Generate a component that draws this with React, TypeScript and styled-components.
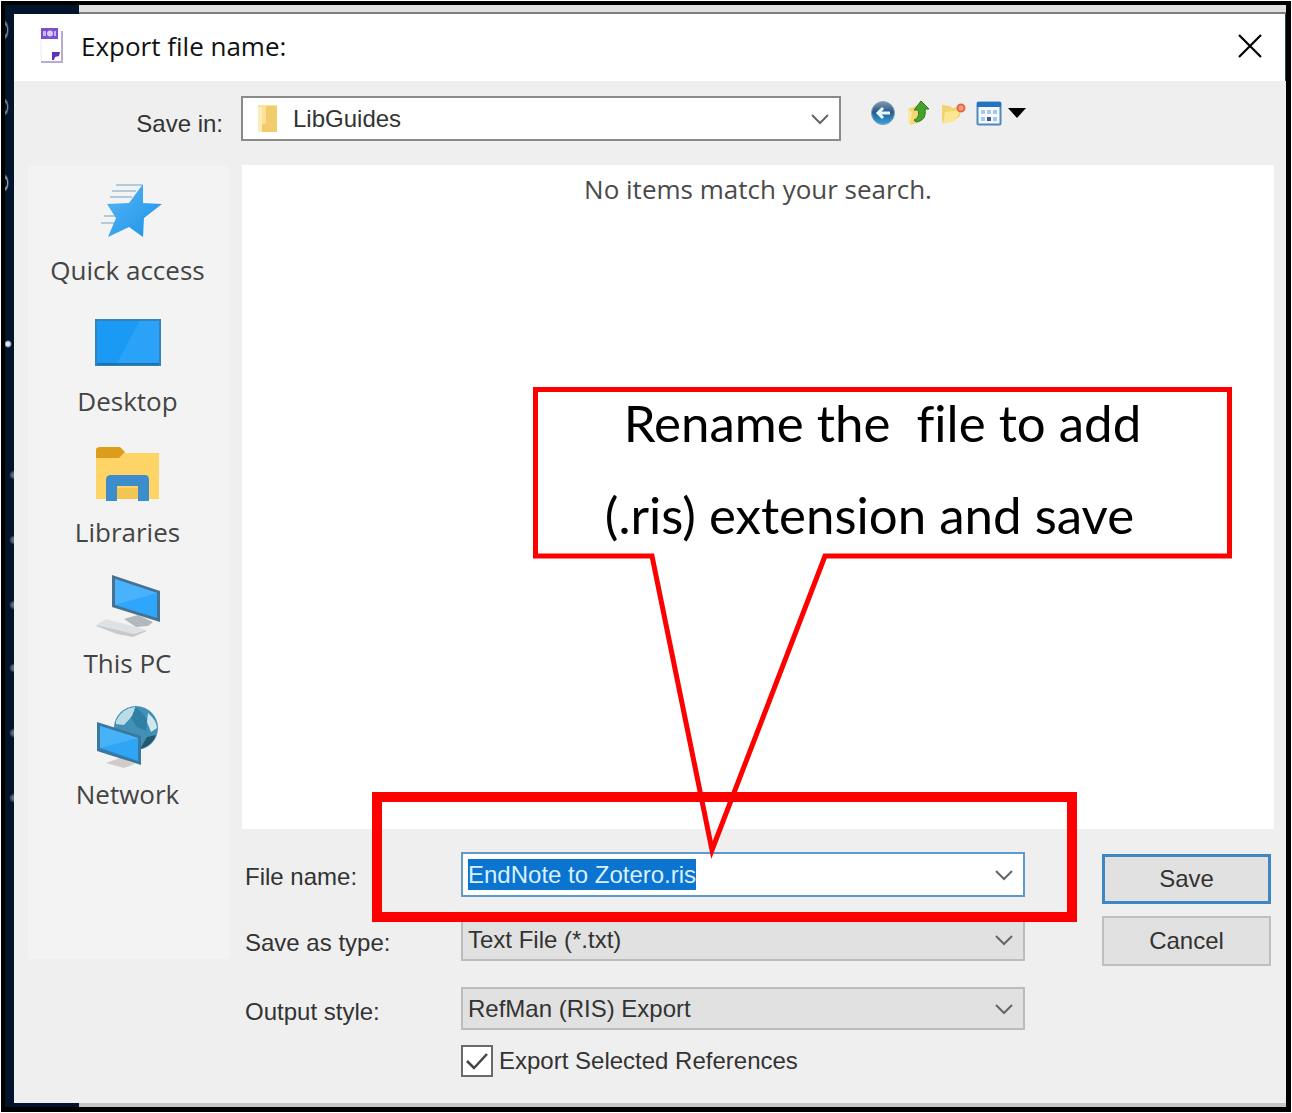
import React, { useEffect, useRef } from "react";
import styled, { createGlobalStyle } from "styled-components";

const GlobalStyle = createGlobalStyle`
  *, *::before, *::after { box-sizing: border-box; }
  body { margin: 0; background: #fff; }
  button, input, select { font: inherit; color: inherit; margin: 0; }
`;

const ui = `"Open Sans", "Noto Sans", sans-serif`;
const classic = `"Liberation Sans", Arial, sans-serif`;

const Screen = styled.div`
  min-height: 100vh;
  padding: 1px;
  display: flex;
`;

const Desktop = styled.div`
  flex: 1;
  display: flex;
  border: 5px solid #000;
  border-left-width: 4px;
  border-top-width: 4px;
  padding: 9px 0 4px 9px;
  background:
    radial-gradient(circle at 3px 339px, #dfe6ee 2px, transparent 4px),
    radial-gradient(circle at 9px 470px, #5d6c80 2px, transparent 5px),
    radial-gradient(circle at 9px 535px, #5d6c80 2px, transparent 5px),
    radial-gradient(circle at 9px 600px, #5d6c80 2px, transparent 5px),
    radial-gradient(circle at 9px 663px, #5d6c80 2px, transparent 5px),
    radial-gradient(circle at 9px 728px, #5d6c80 2px, transparent 5px),
    radial-gradient(circle at 9px 793px, #5d6c80 2px, transparent 5px),
    radial-gradient(ellipse 4px 10px at 0 25px, transparent 40%, #8494a6 60%, transparent 100%),
    radial-gradient(ellipse 4px 9px at 0 102px, transparent 40%, #8494a6 60%, transparent 100%),
    radial-gradient(ellipse 4px 9px at 0 178px, transparent 40%, #a4b0be 60%, transparent 100%),
    linear-gradient(90deg, #02142b 74px, transparent 74px),
    linear-gradient(#e0e0e0 7px, #7d7d7d 7px, #7d7d7d 9px, #c6c6c6 9px);
`;

const Dialog = styled.section`
  flex: 1;
  display: flex;
  flex-direction: column;
  background: #efefef;
  color: #333;
  font: 24px/32px ${classic};
`;

const TitleBar = styled.header`
  display: flex;
  align-items: center;
  gap: 16px;
  height: 67px;
  padding: 0 23px 3px 25px;
  border-right: 1px solid #2a4a5c;
  background: #fff;
  color: #111;
`;

const Title = styled.h1`
  flex: 1;
  margin: 0;
  font: 400 26px/32px ${ui};
`;

const IconButton = styled.button`
  display: flex;
  padding: 0;
  border: 0;
  background: none;
`;

const LookIn = styled.div`
  display: grid;
  grid-template-columns: 227px minmax(200px, 600px) auto;
  align-items: start;
  height: 84px;
  padding: 15px 12px 0 0;
`;

const LookInLabel = styled.label`
  justify-self: end;
  margin-right: 18px;
  padding: 12px 0;
`;

const Tools = styled.div`
  display: flex;
  align-items: center;
  gap: 10px;
  height: 34px;
  margin-left: 29px;
`;

const ViewTools = styled.div`
  display: flex;
  align-items: center;
  gap: 6px;
`;

const Columns = styled.div`
  flex: 1;
  display: grid;
  grid-template-columns: 201px 1fr;
  gap: 13px;
  padding: 0 12px 0 14px;
`;

const Places = styled.nav`
  margin-bottom: 144px;
  padding: 15px 2px 0 0;
  background: #f3f3f3;
`;

const Place = styled.a`
  display: flex;
  flex-direction: column;
  align-items: center;
  gap: 10px;
  height: 131px;
  color: #444;
  text-decoration: none;
  font: 26px/32px ${ui};
`;

const Main = styled.main`
  display: flex;
  flex-direction: column;
`;

const FileList = styled.div`
  flex: 1;
  min-height: 320px;
  padding-top: 8px;
  background: #fff;
  text-align: center;
  color: #4a4a4a;
  font: 26px/32px ${ui};
`;

const Form = styled.form`
  display: grid;
  grid-template-columns: 1fr 169px;
  gap: 77px;
  padding: 23px 3px 26px;
`;

const Fields = styled.div`
  display: grid;
  grid-template-columns: 216px 1fr;
  grid-template-rows: 66px 69px 58px 32px;
  align-items: start;
`;

const FieldLabel = styled.label`
  padding-top: 9px;
`;

const Field = styled.div`
  position: relative;
`;

const Combo = styled.div<{ $tone: "white" | "grey" | "active" }>`
  display: flex;
  align-items: center;
  height: ${(p) => (p.$tone === "grey" ? "43px" : "45px")};
  border: 2px solid ${(p) => ({ white: "#8a8a8a", grey: "#bcbcbc", active: "#5f9bc9" })[p.$tone]};
  background: ${(p) => (p.$tone === "grey" ? "#e1e1e1" : "#fff")};
`;

const LocationCombo = styled(Combo)`
  padding-left: 14px;
`;

const Stack = styled.div`
  flex: 1;
  display: grid;
  align-items: center;

  > * { grid-area: 1 / 1; }
  > svg { justify-self: end; margin-right: 9px; pointer-events: none; }
`;

const Select = styled.select`
  appearance: none;
  width: 100%;
  height: 36px;
  padding: 0 0 0 5px;
  border: 0;
  outline: 0;
  background: transparent;
`;

const LocationSelect = styled(Select)`
  padding-left: 14px;
`;

const FileInput = styled.input`
  flex: 1;
  min-width: 0;
  height: 31px;
  margin-left: 5px;
  padding: 0;
  border: 0;
  outline: 0;
  line-height: 31px;
  background: transparent;

  &::selection { background: #0a74d0; color: #d9f0ff; }
`;

const DropButton = styled(IconButton)`
  margin-right: 9px;
`;

const CheckRow = styled.label`
  grid-column: 2;
  display: flex;
  align-items: center;
  gap: 6px;
`;

const CheckStack = styled.span`
  display: grid;

  > * { grid-area: 1 / 1; }
  > svg { pointer-events: none; }
`;

const CheckBox = styled.input`
  appearance: none;
  width: 32px;
  height: 32px;
  border: 2px solid #6a6a6a;
  background: #fff;
`;

const Actions = styled.div`
  display: flex;
  flex-direction: column;
  gap: 12px;
  padding-top: 2px;
`;

const Action = styled.button<{ $primary?: boolean }>`
  height: 50px;
  padding: 0;
  border: ${(p) => (p.$primary ? "3px solid #3f87c4" : "2px solid #bfbfbf")};
  background: #e1e1e1;
`;

const Highlight = styled.div`
  position: absolute;
  inset: -60px -52px -25px -89px;
  z-index: 1;
  border: 10px solid #f00;
  pointer-events: none;
`;

const Callout = styled.div`
  position: absolute;
  z-index: 2;
  left: 72px;
  bottom: 33px;
  width: 699px;
  height: 477px;
  display: grid;
  pointer-events: none;

  > * { grid-area: 1 / 1; }
`;

const CalloutText = styled.p`
  margin: -10px 0 0;
  white-space: pre;
  text-align: center;
  color: #000;
  font: 51px/92px Lato, ${ui};
  font-variant-ligatures: none;
`;

const Chevron = () => (
  <svg width="20" height="20" viewBox="0 0 20 20" fill="none" stroke="#666" strokeWidth="2">
    <path d="M2 6l8 8 8-8" />
  </svg>
);

const DocIcon = () => (
  <svg width="26" height="36" viewBox="0 0 26 36">
    <path d="M23 3v31H2" fill="none" stroke="#b9a9d6" strokeWidth="2" />
    <path d="M2 0h17v11H2z" fill="#7a4fd0" />
    <path d="M4 3h3v5H4zM15 3h2v5h-2z" fill="#c9b5f5" />
    <circle cx="11" cy="5.500" r="3" fill="#d9ccfa" />
    <path d="M2 11v21" stroke="#ece6f7" strokeWidth="1" />
    <path d="M13 24h8l-1 4-4 1-1 3h-2z" fill="#5c33b8" />
  </svg>
);

const CloseIcon = () => (
  <svg width="24" height="24" viewBox="0 0 24 24" stroke="#000" strokeWidth="2.200">
    <path d="M1 1l22 22M23 1L1 23" />
  </svg>
);

const FolderIcon = () => (
  <svg width="22" height="30" viewBox="0 0 22 30">
    <path d="M1 1h19v27H1z" fill="#fbe19a" />
    <path d="M9 2h11v26H5v-7l4-2z" fill="#f2cb6c" />
    <path d="M1 3h4v25H1z" fill="#fdebb8" />
  </svg>
);

const BackIcon = () => (
  <svg width="26" height="26" viewBox="0 0 26 26">
    <defs>
      <linearGradient id="back" x1="0" y1="0" x2="0" y2="1">
        <stop offset="0" stopColor="#8796a8" />
        <stop offset=".45" stopColor="#245a8c" />
        <stop offset="1" stopColor="#38a5dc" />
      </linearGradient>
    </defs>
    <circle cx="13" cy="13" r="11.500" fill="url(#back)" stroke="#7fa3c0" />
    <path d="M20 13H8M13 8l-5 5 5 5" fill="none" stroke="#eaf8ff" strokeWidth="3" />
  </svg>
);

const UpIcon = () => (
  <svg width="24" height="26" viewBox="0 0 24 26">
    <path d="M2 9l8-3 4 4v12L4 25z" fill="#f2d774" />
    <path d="M2 9l4 4-2 12-2-2z" fill="#fae9a5" />
    <path d="M8 20c5-2 5-6 4-10H8l7-9 8 8h-4c1 7-1 12-9 13z" fill="#46a02c" stroke="#2c7a1c" />
  </svg>
);

const NewFolderIcon = () => (
  <svg width="26" height="26" viewBox="0 0 26 26">
    <path d="M2 5l8 1 2 2 8-1v9l-6 5-12 2z" fill="#f1d36f" />
    <path d="M5 12l16-2-6 11-12 3z" fill="#fbe793" />
    <circle cx="21" cy="8" r="3.500" fill="#f7a27c" stroke="#e5673f" strokeWidth="2" />
  </svg>
);

const ViewIcon = () => (
  <svg width="26" height="26" viewBox="0 0 26 26">
    <rect x="1.500" y="2.500" width="23" height="22" rx="1" fill="#f4faff" stroke="#4f88bd" strokeWidth="2" />
    <path d="M1 2h24v5H1z" fill="#2472c4" />
    <path d="M5 10h4v4H5zM11 10h4v4h-4zM17 10h4v4h-4zM5 17h4v4H5zM17 17h4v4h-4z" fill="#a9c8e4" />
    <path d="M11 17h4v4h-4z" fill="#44597d" />
  </svg>
);

const Caret = () => (
  <svg width="18" height="10" viewBox="0 0 18 10">
    <path d="M0 0h18L9 10z" fill="#000" />
  </svg>
);

const StarIcon = () => (
  <svg width="68" height="64" viewBox="0 0 68 64">
    <defs>
      <linearGradient id="star" x1="0" y1="0" x2="1" y2="1">
        <stop offset="0" stopColor="#5ab8f5" />
        <stop offset="1" stopColor="#1a90e8" />
      </linearGradient>
    </defs>
    <path d="M22 5h26M18 11h24M16 17h22M10 36h12M7 43h13" stroke="#9dbdd2" strokeWidth="1.500" />
    <path d="M49 4v19l19 1-18 14-1 19-14-10-21 10 8-19-9-14 22-1z" fill="url(#star)" />
  </svg>
);

const DesktopIcon = () => (
  <svg width="68" height="64" viewBox="0 0 68 64">
    <path d="M2 9h64v45H2z" fill="#1a9af5" />
    <path d="M46 9h20v45H22z" fill="#2aa2f8" />
    <path d="M2 9h64v45H2z" fill="none" stroke="#2f86bf" strokeWidth="2" />
    <path d="M3 53h62" stroke="#2272a8" strokeWidth="2" />
  </svg>
);

const LibrariesIcon = () => (
  <svg width="68" height="64" viewBox="0 0 68 64">
    <path d="M2 6h24l5 5h34v46H2z" fill="#fdd465" />
    <path d="M2 9q0-4 4-4h20l5 5-6 6H2z" fill="#dc9c1c" />
    <path d="M12 59V38q0-5 5-5h34q4 0 4 5v21H44V44H23v15z" fill="#3b8ecb" />
    <path d="M23 46h21v11H23z" fill="#f3c552" />
  </svg>
);

const PcIcon = () => (
  <svg width="68" height="64" viewBox="0 -2 68 64">
    <path d="M2 51l10-6 41 11-14 6-16-3z" fill="#c6cacd" />
    <path d="M12 44l41 11-13 4L2 50z" fill="#dfe2e4" />
    <path d="M30 44l14-4 15 7-5 4-12 1z" fill="#b3b8bc" />
    <path d="M18 0l48 16v31L18 32z" fill="#47718f" />
    <path d="M21 4l42 14v25L21 30z" fill="#2ea6fb" />
    <path d="M21 4l42 14-42 12z" fill="#48b2fc" />
  </svg>
);

const NetworkIcon = () => (
  <svg width="68" height="64" viewBox="0 -2 68 64">
    <circle cx="42" cy="22" r="22" fill="#4290b6" />
    <path d="M22 15Q28 2 41 1l-2 8-9 10-8-1z" fill="#b9dce8" />
    <path d="M42 1q7 7 11 12l-1 12-9-4-6-9z" fill="#2f7fa5" />
    <path d="M54 7q9 8 9 15l-6 4-4-10z" fill="#cfe7ef" />
    <path d="M46 43q12-3 16-14l-9 2z" fill="#235870" />
    <path d="M12 57l14-5 15 6-11 4z" fill="#cfccc9" />
    <path d="M3 16l44 14v29L3 45z" fill="#39799f" />
    <path d="M6 20l38 12v23L6 42z" fill="#2ea6f5" />
    <path d="M6 20l38 12L6 42z" fill="#48b2f8" />
  </svg>
);

const places = [
  { name: "Quick access", Icon: StarIcon },
  { name: "Desktop", Icon: DesktopIcon },
  { name: "Libraries", Icon: LibrariesIcon },
  { name: "This PC", Icon: PcIcon },
  { name: "Network", Icon: NetworkIcon },
];

const options = [
  { id: "type", label: "Save as type:", value: "Text File (*.txt)" },
  { id: "style", label: "Output style:", value: "RefMan (RIS) Export" },
];

const Annotation = () => (
  <>
    <Highlight />
    <Callout>
      <svg width="699" height="477" viewBox="0 0 699 477" fill="none" stroke="#f00" strokeWidth="5">
        <path d="M119 169H2.500V2.500h694V169H292L179 463z" strokeMiterlimit="8" />
      </svg>
      <CalloutText>{"Rename the  file to add\n(.ris) extension and save  "}</CalloutText>
    </Callout>
  </>
);

export default function App() {
  const fileName = useRef<HTMLInputElement>(null);

  useEffect(() => {
    fileName.current?.focus();
    fileName.current?.select();
  }, []);

  return (
    <Screen>
      <GlobalStyle />
      <Desktop>
        <Dialog>
          <TitleBar>
            <DocIcon />
            <Title>Export file name:</Title>
            <IconButton type="button" aria-label="Close"><CloseIcon /></IconButton>
          </TitleBar>
          <LookIn>
            <LookInLabel htmlFor="folder">Save in:</LookInLabel>
            <LocationCombo $tone="white">
              <FolderIcon />
              <Stack>
                <LocationSelect id="folder"><option>LibGuides</option></LocationSelect>
                <Chevron />
              </Stack>
            </LocationCombo>
            <Tools>
              <IconButton type="button" aria-label="Back"><BackIcon /></IconButton>
              <IconButton type="button" aria-label="Up one level"><UpIcon /></IconButton>
              <IconButton type="button" aria-label="New folder"><NewFolderIcon /></IconButton>
              <ViewTools>
                <IconButton type="button" aria-label="View"><ViewIcon /></IconButton>
                <IconButton type="button" aria-label="View options"><Caret /></IconButton>
              </ViewTools>
            </Tools>
          </LookIn>
          <Columns>
            <Places>
              {places.map(({ name, Icon }) => (
                <Place key={name} href="#"><Icon />{name}</Place>
              ))}
            </Places>
            <Main>
              <FileList>No items match your search.</FileList>
              <Form onSubmit={(e) => e.preventDefault()}>
                <Fields>
                  <FieldLabel htmlFor="file">File name:</FieldLabel>
                  <Field>
                    <Combo $tone="active">
                      <FileInput id="file" ref={fileName} defaultValue="EndNote to Zotero.ris" spellCheck={false} />
                      <DropButton type="button" aria-label="Recent names"><Chevron /></DropButton>
                    </Combo>
                    <Annotation />
                  </Field>
                  {options.map(({ id, label, value }) => (
                    <React.Fragment key={id}>
                      <FieldLabel htmlFor={id}>{label}</FieldLabel>
                      <Combo $tone="grey">
                        <Stack>
                          <Select id={id}><option>{value}</option></Select>
                          <Chevron />
                        </Stack>
                      </Combo>
                    </React.Fragment>
                  ))}
                  <CheckRow>
                    <CheckStack>
                      <CheckBox type="checkbox" defaultChecked />
                      <svg width="32" height="32" viewBox="0 0 32 32" fill="none" stroke="#444" strokeWidth="2.500">
                        <path d="M6 16l7 7L26 9" />
                      </svg>
                    </CheckStack>
                    Export Selected References
                  </CheckRow>
                </Fields>
                <Actions>
                  <Action $primary type="submit">Save</Action>
                  <Action type="button">Cancel</Action>
                </Actions>
              </Form>
            </Main>
          </Columns>
        </Dialog>
      </Desktop>
    </Screen>
  );
}
